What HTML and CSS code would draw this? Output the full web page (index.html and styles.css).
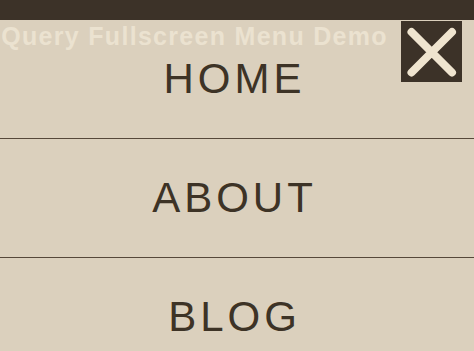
FILE: index.html
```html
<!DOCTYPE html>
<html lang="en">
<head>
<meta charset="utf-8">
<title>jQuery Fullscreen Menu Demo</title>
<link rel="stylesheet" href="styles.css">
</head>
<body>
  <div class="topbar"></div>
  <h1 class="title">jQuery Fullscreen Menu Demo</h1>
  <nav class="menu">
    <a class="menu-item" href="#">HOME</a>
    <a class="menu-item" href="#">ABOUT</a>
    <a class="menu-item" href="#">BLOG</a>
  </nav>
  <button class="close" aria-label="Close menu">
    <svg width="61" height="61" viewBox="0 0 61 61">
      <path d="M10.5 11 L51 51.5 M51 11 L10.5 51.5" stroke="#efe4cf" stroke-width="8" stroke-linecap="round" fill="none"/>
    </svg>
  </button>
</body>
</html>
```

FILE: styles.css
```css
html, body {
  margin: 0;
  padding: 0;
  height: 100%;
  overflow: hidden;
}
body {
  background: #dbd0bd;
  font-family: "Liberation Sans", Arial, sans-serif;
  position: relative;
}
.topbar {
  height: 20px;
  background: #3c3228;
}
.title {
  position: absolute;
  left: -7px;
  top: 24px;
  margin: 0;
  font-size: 25px;
  line-height: 25px;
  font-weight: bold;
  letter-spacing: 1.3px;
  color: #ebe2d0;
  white-space: nowrap;
}
.menu {
  display: flex;
  flex-direction: column;
}
.menu-item {
  display: block;
  height: 118px;
  line-height: 118px;
  border-bottom: 1px solid #56483a;
  text-align: center;
  font-size: 42px;
  letter-spacing: 4px;
  color: #3d3326;
  text-decoration: none;
  padding-right: 5px;
}
.close {
  position: absolute;
  left: 401px;
  top: 21px;
  width: 61px;
  height: 61px;
  padding: 0;
  margin: 0;
  border: 0;
  background: #3c3228;
  display: block;
}
.close svg {
  display: block;
}
```
